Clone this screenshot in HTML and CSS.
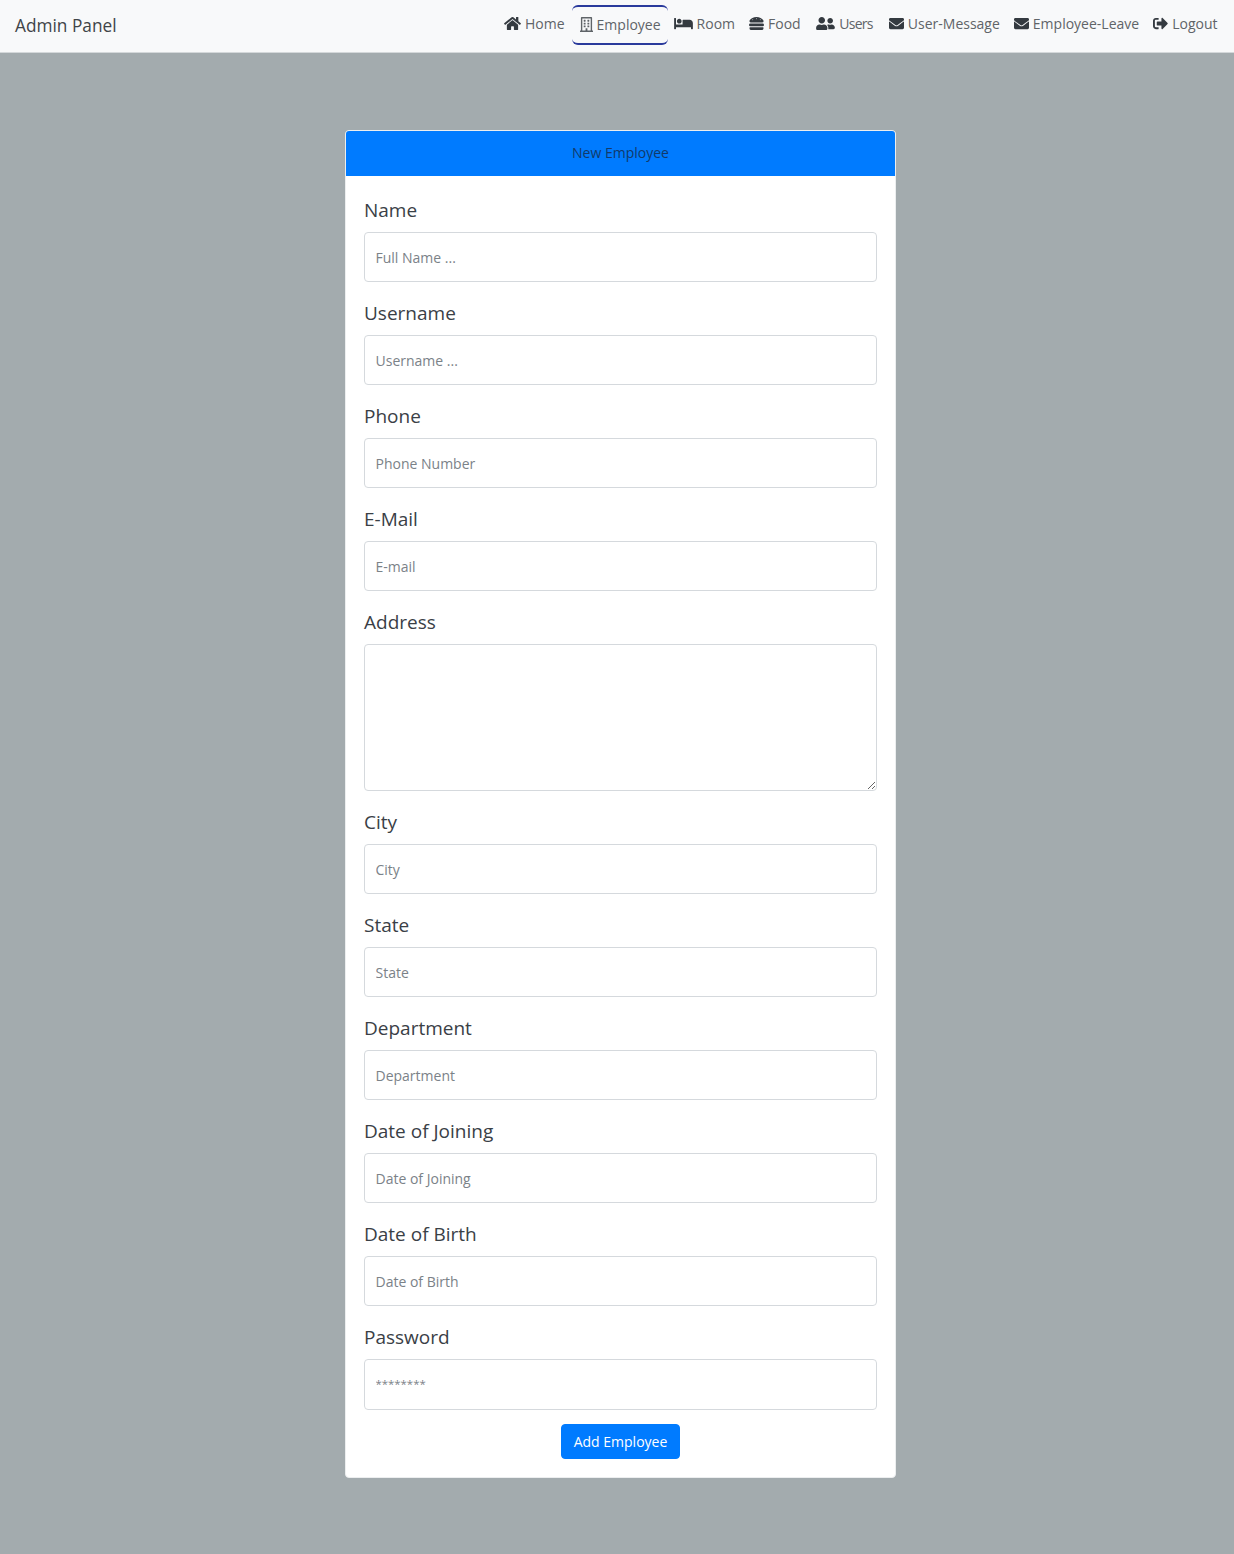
FILE: index.html
```html
<!DOCTYPE html>
<html lang="en">
<head>
<meta charset="utf-8">
<title>Admin Panel</title>
<link rel="stylesheet" href="styles.css">
</head>
<body>
<nav class="navbar">
  <a class="brand" href="#">Admin Panel</a>
  <ul class="nav-list">
    <li><a class="nav-link" href="#"><svg class="icon w576" viewBox="0 0 576 512"><path d="M280.37 148.26L96 300.11V464a16 16 0 0 0 16 16l112.06-.29a16 16 0 0 0 15.92-16V368a16 16 0 0 1 16-16h64a16 16 0 0 1 16 16v95.64a16 16 0 0 0 16 16.05L464 480a16 16 0 0 0 16-16V300L295.67 148.26a12.19 12.19 0 0 0-15.3 0zM571.6 251.47L488 182.56V44.05a12 12 0 0 0-12-12h-56a12 12 0 0 0-12 12v72.61L318.47 43a48 48 0 0 0-61 0L4.34 251.47a12 12 0 0 0-1.6 16.9l25.5 31A12 12 0 0 0 45.15 301l235.22-193.74a12.19 12.19 0 0 1 15.3 0L530.9 301a12 12 0 0 0 16.9-1.6l25.5-31a12 12 0 0 0-1.7-16.93z"/></svg>Home</a></li>
    <li><a class="nav-link active" href="#"><svg class="icon w448" viewBox="0 0 448 512"><path d="M128 148v-40c0-6.6 5.4-12 12-12h40c6.6 0 12 5.4 12 12v40c0 6.6-5.4 12-12 12h-40c-6.6 0-12-5.4-12-12zm140 12h40c6.6 0 12-5.4 12-12v-40c0-6.6-5.4-12-12-12h-40c-6.6 0-12 5.4-12 12v40c0 6.6 5.4 12 12 12zm-128 96h40c6.6 0 12-5.4 12-12v-40c0-6.6-5.4-12-12-12h-40c-6.6 0-12 5.4-12 12v40c0 6.6 5.4 12 12 12zm128 0h40c6.6 0 12-5.4 12-12v-40c0-6.6-5.4-12-12-12h-40c-6.6 0-12 5.4-12 12v40c0 6.6 5.4 12 12 12zm-76 84v-40c0-6.6-5.4-12-12-12h-40c-6.6 0-12 5.4-12 12v40c0 6.6 5.4 12 12 12h40c6.6 0 12-5.4 12-12zm76 12h40c6.6 0 12-5.4 12-12v-40c0-6.6-5.4-12-12-12h-40c-6.6 0-12 5.4-12 12v40c0 6.6 5.4 12 12 12zm180 124v36H0v-36c0-6.6 5.4-12 12-12h19.5V24c0-13.3 10.7-24 24-24h337c13.3 0 24 10.7 24 24v440H436c6.6 0 12 5.4 12 12zM79.5 463H192v-67c0-6.6 5.4-12 12-12h40c6.6 0 12 5.4 12 12v67h112.5V49L80 48l-.5 415z"/></svg>Employee</a></li>
    <li><a class="nav-link" href="#"><svg class="icon w640" viewBox="0 0 640 512"><path d="M176 256c44.11 0 80-35.89 80-80s-35.89-80-80-80-80 35.89-80 80 35.89 80 80 80zm352-128H304c-8.84 0-16 7.16-16 16v144H64V80c0-8.84-7.16-16-16-16H16C7.16 64 0 71.16 0 80v352c0 8.84 7.16 16 16 16h32c8.84 0 16-7.16 16-16v-48h512v48c0 8.84 7.16 16 16 16h32c8.84 0 16-7.16 16-16V240c0-61.86-50.14-112-112-112z"/></svg>Room</a></li>
    <li><a class="nav-link food" href="#"><svg class="icon w512" viewBox="0 0 512 512"><path d="M464 256H48a48 48 0 0 0 0 96h416a48 48 0 0 0 0-96zm16 128H32a16 16 0 0 0-16 16v16a64 64 0 0 0 64 64h352a64 64 0 0 0 64-64v-16a16 16 0 0 0-16-16zM58.64 224h394.72c34.57 0 54.62-43.9 34.82-75.88C448 83.2 359.55 32.1 256 32c-103.54.1-192 51.2-232.18 116.11C4 180.09 24.07 224 58.64 224zM384 112a16 16 0 1 1-16 16 16 16 0 0 1 16-16zM256 80a16 16 0 1 1-16 16 16 16 0 0 1 16-16zm-128 32a16 16 0 1 1-16 16 16 16 0 0 1 16-16z"/></svg>Food</a></li>
    <li><a class="nav-link users" href="#"><svg class="icon w640" viewBox="0 0 640 512"><path d="M192 256c61.9 0 112-50.1 112-112S253.9 32 192 32 80 82.1 80 144s50.1 112 112 112zm76.8 32h-8.3c-20.8 10-43.9 16-68.5 16s-47.6-6-68.5-16h-8.3C51.6 288 0 339.6 0 403.2V432c0 26.5 21.5 48 48 48h288c26.5 0 48-21.5 48-48v-28.8c0-63.6-51.6-115.2-115.2-115.2zM480 256c53 0 96-43 96-96s-43-96-96-96-96 43-96 96 43 96 96 96zm48 32h-3.8c-13.9 4.8-28.6 8-44.2 8s-30.3-3.2-44.2-8H432c-20.4 0-39.2 5.9-55.7 15.4 24.4 26.3 39.7 61.2 39.7 99.8v38.4c0 2.2-.5 4.3-.6 6.4H592c26.5 0 48-21.5 48-48 0-61.9-50.1-112-112-112z"/></svg>Users</a></li>
    <li><a class="nav-link" href="#"><svg class="icon w512" viewBox="0 0 512 512"><path d="M502.3 190.8c3.9-3.1 9.7-.2 9.7 4.7V400c0 26.5-21.5 48-48 48H48c-26.5 0-48-21.5-48-48V195.6c0-5 5.7-7.8 9.7-4.7 22.4 17.4 52.1 39.5 154.1 113.6 21.1 15.4 56.7 47.8 92.2 47.6 35.7.3 72-32.8 92.3-47.6 102-74.1 131.6-96.3 154-113.7zM256 320c23.2.4 56.6-29.2 73.4-41.4 132.7-96.3 142.8-104.7 173.4-128.7 5.8-4.5 9.2-11.5 9.2-18.9v-19c0-26.5-21.5-48-48-48H48C21.5 64 0 85.5 0 112v19c0 7.4 3.4 14.3 9.2 18.9 30.6 23.9 40.7 32.4 173.4 128.7 16.8 12.2 50.2 41.8 73.4 41.4z"/></svg>User-Message</a></li>
    <li><a class="nav-link" href="#"><svg class="icon w512" viewBox="0 0 512 512"><path d="M502.3 190.8c3.9-3.1 9.7-.2 9.7 4.7V400c0 26.5-21.5 48-48 48H48c-26.5 0-48-21.5-48-48V195.6c0-5 5.7-7.8 9.7-4.7 22.4 17.4 52.1 39.5 154.1 113.6 21.1 15.4 56.7 47.8 92.2 47.6 35.7.3 72-32.8 92.3-47.6 102-74.1 131.6-96.3 154-113.7zM256 320c23.2.4 56.6-29.2 73.4-41.4 132.7-96.3 142.8-104.7 173.4-128.7 5.8-4.5 9.2-11.5 9.2-18.9v-19c0-26.5-21.5-48-48-48H48C21.5 64 0 85.5 0 112v19c0 7.4 3.4 14.3 9.2 18.9 30.6 23.9 40.7 32.4 173.4 128.7 16.8 12.2 50.2 41.8 73.4 41.4z"/></svg>Employee-Leave</a></li>
    <li><a class="nav-link" href="#"><svg class="icon w512" viewBox="0 0 512 512"><path d="M497 273L329 441c-15 15-41 4.5-41-17v-96H152c-13.3 0-24-10.7-24-24v-96c0-13.3 10.7-24 24-24h136V88c0-21.4 25.9-32 41-17l168 168c9.3 9.4 9.3 24.6 0 34zM192 436v-40c0-6.6-5.4-12-12-12H96c-17.7 0-32-14.3-32-32V160c0-17.7 14.3-32 32-32h84c6.6 0 12-5.4 12-12V76c0-6.6-5.4-12-12-12H96c-53 0-96 43-96 96v192c0 53 43 96 96 96h84c6.6 0 12-5.4 12-12z"/></svg>Logout</a></li>
  </ul>
</nav>
<main class="content">
  <section class="card">
    <header class="card-header">New Employee</header>
    <form class="card-body">
      <div class="group"><label class="label">Name</label><input class="control" type="text" placeholder="Full Name ..."></div>
      <div class="group"><label class="label">Username</label><input class="control" type="text" placeholder="Username ..."></div>
      <div class="group"><label class="label">Phone</label><input class="control" type="text" placeholder="Phone Number"></div>
      <div class="group"><label class="label">E-Mail</label><input class="control" type="text" placeholder="E-mail"></div>
      <div class="group"><label class="label">Address</label><textarea class="control area"></textarea></div>
      <div class="group"><label class="label">City</label><input class="control" type="text" placeholder="City"></div>
      <div class="group"><label class="label">State</label><input class="control" type="text" placeholder="State"></div>
      <div class="group"><label class="label">Department</label><input class="control" type="text" placeholder="Department"></div>
      <div class="group"><label class="label">Date of Joining</label><input class="control" type="text" placeholder="Date of Joining"></div>
      <div class="group"><label class="label">Date of Birth</label><input class="control" type="text" placeholder="Date of Birth"></div>
      <div class="group last"><label class="label">Password</label><input class="control secret" type="text" placeholder="********"></div>
      <div class="actions"><button class="btn" type="button">Add Employee</button></div>
    </form>
  </section>
</main>
</body>
</html>
```
FILE: styles.css
```css
* { box-sizing: border-box; }
html, body { margin: 0; padding: 0; }
body {
  background: #a3abae;
  color: #343a40;
  font-family: "Open Sans", "Noto Sans", sans-serif;
  font-size: 14.5px;
  min-height: 1554px;
}
.navbar {
  display: flex;
  align-items: center;
  justify-content: space-between;
  height: 53px;
  padding: 0 9.5px 1px 15px;
  background: #f8f9fa;
  border-bottom: 1px solid #d4d8da;
}
.brand {
  color: #3f4448;
  font-size: 17.3px;
  text-decoration: none;
}
.nav-list {
  display: flex;
  align-items: center;
  list-style: none;
  margin: 0;
  padding: 0;
}
.nav-link {
  display: flex;
  align-items: center;
  gap: 4px;
  padding: 0 7px;
  color: #5f6468;
  font-size: 14px;
  text-decoration: none;
  height: 40px;
  margin-top: -5px;
}
.nav-link.active {
  width: 96px;
  padding: 0 8px;
  margin: -2px -1px 0 0;
  border-top: 2px solid #2a3a9c;
  border-bottom: 2px solid #2a3a9c;
  border-radius: 6px;
}
.nav-link.food { margin-right: 1.5px; }
.nav-link.users { letter-spacing: -0.7px; margin-right: 2px; }
.icon { height: 15px; fill: #343a40; flex: none; }
.w576 { width: 17px; }
.w448 { width: 13px; fill: #5f6468; }
.w640 { width: 19px; }
.w512 { width: 15px; }
.content {
  display: flex;
  justify-content: center;
  padding: 77px 0 76px 7px;
}
.card {
  width: 551px;
  background: #fff;
  border: 1px solid #eceeef;
  border-radius: 4px;
  overflow: hidden;
}
.card-header {
  height: 45px;
  padding-bottom: 2px;
  background: #007bff;
  color: #123a6a;
  display: flex;
  align-items: center;
  justify-content: center;
  font-size: 14px;
}
.card-body {
  padding: 19px 18px 18px;
}
.group { margin-bottom: 16px; }
.group.last { margin-bottom: 14px; }
.label {
  display: block;
  padding-top: 2px;
  font-size: 19px;
  line-height: 27px;
  margin-bottom: 8px;
  color: #3a4046;
}
.control {
  display: block;
  width: 100%;
  height: 50px;
  padding: 0 10.5px;
  border: 1px solid #d5d9dd;
  border-radius: 4px;
  background: #fff;
  font-family: inherit;
  font-size: 14px;
  color: #495057;
}
.control::placeholder { color: #7b8288; opacity: 1; }
.secret { height: 51px; padding-bottom: 5px; }
.secret::placeholder { font-size: 11.4px; }
.area { height: 147px; resize: vertical; }
.actions { display: flex; justify-content: center; }
.btn {
  height: 35px;
  padding: 0 11.5px;
  border: 1px solid #007bff;
  border-radius: 4px;
  background: #007bff;
  color: #fff;
  font-family: inherit;
  font-size: 14px;
}
```
